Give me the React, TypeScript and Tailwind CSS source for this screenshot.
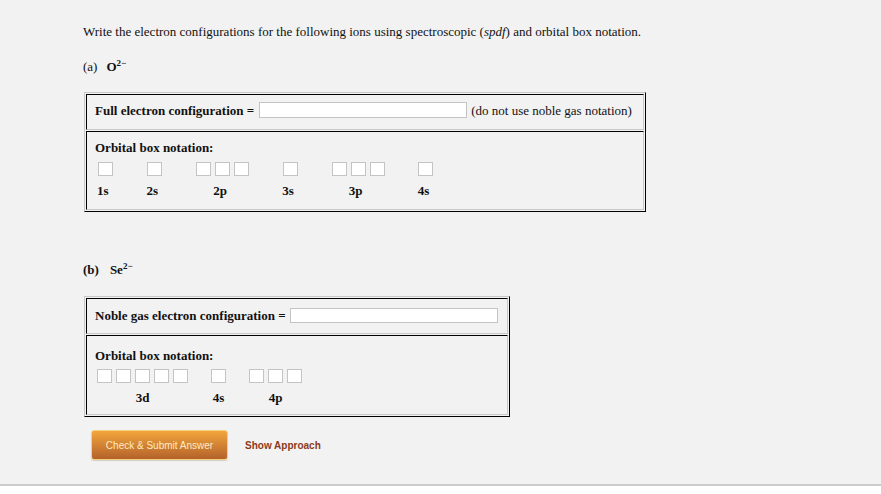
import React from 'react';

// A row of empty orbital boxes with its label underneath
const OrbitalGroup: React.FC<{ label: string; count: number; shiftLabel?: boolean }> = ({ label, count, shiftLabel }) => (
    <div className="flex flex-col items-center">
        <div className="flex gap-[4px]">
            {Array.from({ length: count }).map((_, i) => (
                <div key={i} className="w-[15px] h-[14px] bg-white border border-[#c4c4c4]" />
            ))}
        </div>
        <div className={`mt-[8px] h-[14px] leading-[14px] font-bold ${shiftLabel ? 'mr-[5px]' : ''}`}>{label}</div>
    </div>
);

// Table-like frame: outset outer border, inset cells
const Frame: React.FC<{ width: string; children: React.ReactNode }> = ({ width, children }) => (
    <div className={`${width} flex flex-col gap-px p-px border border-t-[#c8c8c8] border-l-[#c8c8c8] border-r-black border-b-black`}>
        {children}
    </div>
);

const Cell: React.FC<{ className?: string; children: React.ReactNode }> = ({ className, children }) => (
    <div className={`border border-t-black border-l-black border-r-[#c8c8c8] border-b-[#c8c8c8] ${className ?? ''}`}>
        {children}
    </div>
);

const App: React.FC = () => {
    const partA = [
        { label: '1s', count: 1 },
        { label: '2s', count: 1 },
        { label: '2p', count: 3 },
        { label: '3s', count: 1 },
        { label: '3p', count: 3 },
        { label: '4s', count: 1 },
    ];
    const partB = [
        { label: '3d', count: 5 },
        { label: '4s', count: 1 },
        { label: '4p', count: 3 },
    ];

    return (
        <div className="w-[881px] h-[494px] bg-white">
            <div className="h-[486px] bg-[#f2f2f2] border-b-2 border-[#cccccc] pl-[83px] pt-[24px] font-['Liberation_Serif',serif] text-[13px] leading-[15px] text-[#111]">
                <p>
                    Write the electron configurations for the following ions using spectroscopic (<i>spdf</i>) and orbital box notation.
                </p>

                {/* (a) */}
                <p className="mt-[20px]">
                    (a)<span className="ml-[9px] font-bold">O<sup className="text-[9px] relative -top-[5px]">2−</sup></span>
                </p>

                <div className="mt-[18px] ml-[1px]">
                    <Frame width="w-[562px]">
                        <Cell className="h-[36px] pl-[8px] pt-[7px] flex items-start">
                            <span className="font-bold mt-[1px]">Full electron configuration =</span>
                            <input type="text" className="ml-[5px] w-[208px] h-[16px] bg-white border border-[#c4c4c4] outline-none" />
                            <span className="ml-[4px] mt-[1px]">(do not use noble gas notation)</span>
                        </Cell>
                        <Cell className="h-[79px] pl-[8px] pt-[8px]">
                            <div className="font-bold">Orbital box notation:</div>
                            <div className="mt-[7px] ml-[2px] flex gap-[33px]">
                                {partA.map(g => (
                                    <OrbitalGroup key={g.label} label={g.label} count={g.count} shiftLabel />
                                ))}
                            </div>
                        </Cell>
                    </Frame>
                </div>

                {/* (b) */}
                <p className="mt-[50px] font-bold">
                    (b)<span className="ml-[11px]">Se<sup className="text-[9px] relative -top-[5px]">2−</sup></span>
                </p>

                <div className="mt-[19px] ml-[1px]">
                    <Frame width="w-[426px]">
                        <Cell className="h-[36px] pl-[8px] pt-[9px] flex items-start">
                            <span className="font-bold">Noble gas electron configuration =</span>
                            <input type="text" className="ml-[4px] w-[208px] h-[15px] bg-white border border-[#c4c4c4] outline-none" />
                        </Cell>
                        <Cell className="h-[80px] pl-[8px] pt-[12px]">
                            <div className="font-bold">Orbital box notation:</div>
                            <div className="mt-[6px] ml-[2px] flex gap-[23px]">
                                {partB.map(g => (
                                    <OrbitalGroup key={g.label} label={g.label} count={g.count} />
                                ))}
                            </div>
                        </Cell>
                    </Frame>
                </div>

                <div className="mt-[13px] ml-[8px] flex items-center font-['Liberation_Sans',sans-serif]">
                    <button className="w-[137px] h-[30px] rounded-[3px] border border-[#f6cf7c] bg-gradient-to-b from-[#f2a63c] to-[#b4622b] text-[10px] text-[#fdebc4] shadow-[0_1px_1px_rgba(0,0,0,0.15)]">
                        Check &amp; Submit Answer
                    </button>
                    <button className="ml-[17px] text-[10px] font-bold text-[#8a3a1c]">Show Approach</button>
                </div>
            </div>
        </div>
    );
};

export default App;
